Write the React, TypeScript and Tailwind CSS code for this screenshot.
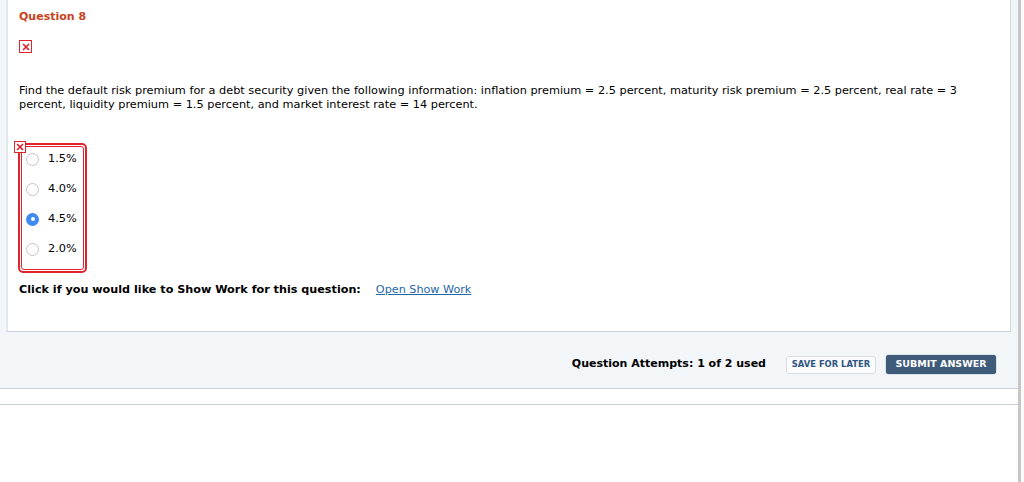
import React from "react";

const options = [
    { label: "1.5%", checked: false },
    { label: "4.0%", checked: false },
    { label: "4.5%", checked: true },
    { label: "2.0%", checked: false },
];

const WrongMark = ({ className }: { className?: string }) => (
    <div className={`flex items-center justify-center border border-[#e0242e] bg-white ${className ?? ""}`}>
        <svg viewBox="0 0 10 10" className="w-[8px] h-[8px]">
            <path d="M2 2 L8 8 M8 2 L2 8" stroke="#e0242e" strokeWidth="2" strokeLinecap="square" />
        </svg>
    </div>
);

const Radio = ({ checked }: { checked: boolean }) =>
    checked ? (
        <div className="w-[13px] h-[13px] rounded-full bg-[#3d8af2] flex items-center justify-center">
            <div className="w-[4px] h-[4px] rounded-full bg-white" />
        </div>
    ) : (
        <div className="w-[13px] h-[13px] rounded-full border border-[#c4c4c4] bg-white" />
    );

export default function App() {
    return (
        <div
            className="flex w-full h-[482px] overflow-hidden text-black"
            style={{ fontFamily: "'DejaVu Sans', Verdana, sans-serif" }}
        >
            <div className="flex-1 flex flex-col">
                {/* question panel */}
                <div className="bg-[#f3f6f9] pl-[6px] pr-[7px]">
                    <div className="bg-white border-l-2 border-r border-b border-l-[#e3e8ee] border-r-[#d3d9e0] border-b-[#ccd3dc] h-[332px] pl-[11px] pt-[10px] relative">
                        <div className="text-[11px] leading-[14px] font-bold text-[#c7421c]">Question 8</div>

                        <WrongMark className="w-[13px] h-[13px] mt-[16px]" />

                        <p className="text-[11.3px] leading-[14px] mt-[31px] pr-[20px]">
                            Find the default risk premium for a debt security given the following information: inflation premium = 2.5 percent, maturity risk premium = 2.5 percent, real rate = 3 percent, liquidity premium = 1.5 percent, and market interest rate = 14 percent.
                        </p>

                        <div className="relative mt-[31px] -ml-[1px] w-[69px] border-2 border-[#e0242e] rounded-[5px] p-[1px]">
                            <WrongMark className="absolute -left-[6px] -top-[4px] w-[12px] h-[12px]" />
                            <div className="border border-[#e0242e] rounded-[3px] flex flex-col gap-[6px] pb-[8px]">
                                {options.map((o) => (
                                    <div key={o.label} className="flex items-center h-[24px] pl-[4px]">
                                        <Radio checked={o.checked} />
                                        <span className="ml-[9px] text-[11.3px]">{o.label}</span>
                                    </div>
                                ))}
                            </div>
                        </div>

                        <div className="flex items-center mt-[10px] text-[11.2px] leading-[14px]">
                            <span className="font-bold">Click if you would like to Show Work for this question:</span>
                            <a className="ml-[15px] text-[#2467a6] underline cursor-pointer">Open Show Work</a>
                        </div>
                    </div>

                    {/* footer bar */}
                    <div className="h-[56px] flex items-center justify-end pt-[9px] pr-[15px]">
                        <span className="text-[11px] font-bold mr-[20px]">Question Attempts: 1 of 2 used</span>
                        <button className="h-[18px] w-[90px] rounded-[3px] border border-[#d9dee5] bg-[#fafbfc] text-[8.4px] font-bold text-[#2f5680] mr-[10px]">
                            SAVE FOR LATER
                        </button>
                        <button className="h-[19px] w-[110px] rounded-[3px] bg-[#3f5b7a] text-[9.5px] font-bold text-white shadow-[0_0_1px_#20344a]">
                            SUBMIT ANSWER
                        </button>
                    </div>
                </div>
                <div className="border-t border-[#cdd3dc] h-[16px] bg-white" />
                <div className="border-t border-[#cdd3dc] flex-1 bg-white" />
            </div>
            <div className="w-[3px] bg-[#c7c7c7]" />
            <div className="w-[3px] bg-[#fbfbfb]" />
        </div>
    );
}
